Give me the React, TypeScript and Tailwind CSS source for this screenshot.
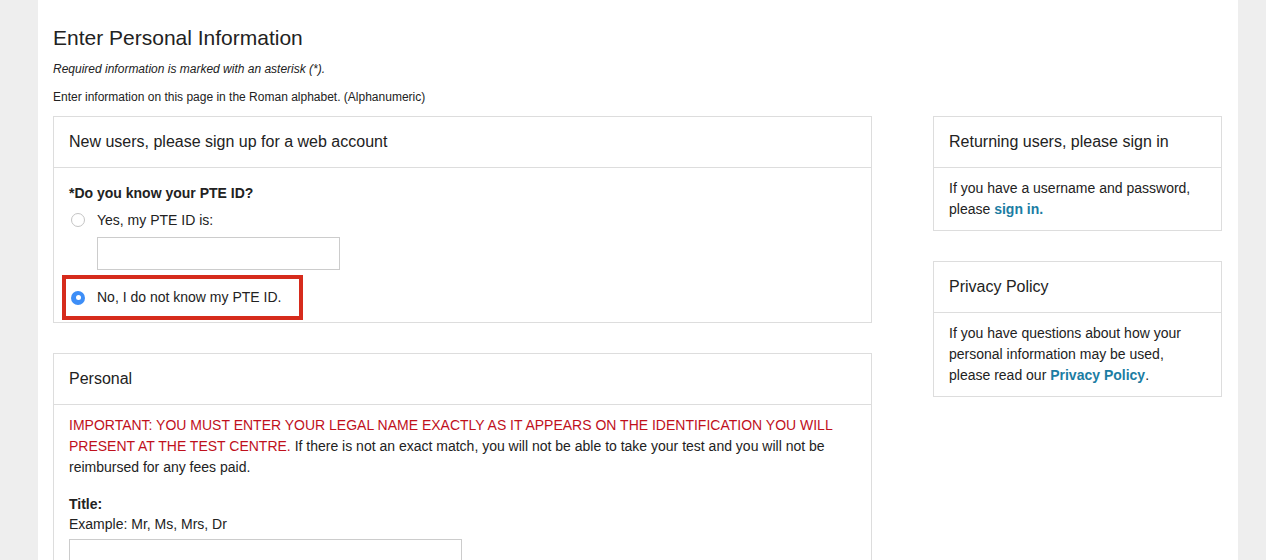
const font = { fontFamily: '"Liberation Sans", Arial, sans-serif' };

const Radio = ({ checked }: { checked?: boolean }) =>
    checked ? (
        <span className="flex h-[14px] w-[14px] items-center justify-center rounded-full bg-[#3d8ef7]">
            <span className="h-[5px] w-[5px] rounded-full bg-white" />
        </span>
    ) : (
        <span className="h-[14px] w-[14px] rounded-full border border-[#c4c4c4] bg-white" />
    );

const Panel = ({ title, children, bodyClass }: { title: string; children: React.ReactNode; bodyClass?: string }) => (
    <div className="border border-[#dddddd] bg-white">
        <div className="flex h-[51px] items-center border-b border-[#dddddd] px-[15px] text-[16px] text-[#222]">{title}</div>
        <div className={bodyClass ?? "px-[15px] py-[10px] text-[14px] leading-[21px] text-[#222]"}>{children}</div>
    </div>
);

export default function App() {
    return (
        <div className="min-h-[560px] bg-[#eeeeee]" style={font}>
            <div className="ml-[38px] min-h-[560px] w-[1200px] bg-white px-[15px] pt-[24px]">
                <h1 className="text-[21px] leading-[27px] text-[#222]">Enter Personal Information</h1>
                <p className="mt-[10px] text-[12px] italic leading-[16px] text-[#222]">
                    Required information is marked with an asterisk (*).
                </p>
                <p className="mt-[12px] text-[12px] leading-[16px] text-[#222]">
                    Enter information on this page in the Roman alphabet. (Alphanumeric)
                </p>

                <div className="mt-[11px] flex gap-[61px]">
                    <div className="flex w-[819px] flex-col gap-[30px]">
                        <Panel title="New users, please sign up for a web account" bodyClass="px-[15px] pt-[15px] pb-[2px] text-[14px] text-[#222]">
                            <p className="font-bold leading-[20px]">*Do you know your PTE ID?</p>
                            <label className="mt-[7px] flex items-center gap-[12px] pl-[2px] leading-[20px]">
                                <Radio />
                                Yes, my PTE ID is:
                            </label>
                            <input className="mt-[7px] ml-[28px] block h-[33px] w-[243px] border border-[#cccccc]" />
                            <div className="mt-[5px] -ml-[7px] inline-flex h-[45px] items-center gap-[12px] border-4 border-[#d62b1c] pl-[5px] pr-[18px]">
                                <Radio checked />
                                <span>No, I do not know my PTE ID.</span>
                            </div>
                        </Panel>

                        <Panel title="Personal" bodyClass="px-[15px] pt-[10px] text-[14px] leading-[21px] text-[#222]">
                            <p>
                                <span className="text-[#c0101c]">
                                    IMPORTANT: YOU MUST ENTER YOUR LEGAL NAME EXACTLY AS IT APPEARS ON THE IDENTIFICATION YOU WILL PRESENT AT THE TEST CENTRE.
                                </span>{" "}
                                If there is not an exact match, you will not be able to take your test and you will not be reimbursed for any fees paid.
                            </p>
                            <p className="mt-[16px] font-bold leading-[20px]">Title:</p>
                            <p className="leading-[20px]">Example: Mr, Ms, Mrs, Dr</p>
                            <input className="mt-[5px] block h-[33px] w-[393px] border border-[#cccccc]" />
                            <div className="h-[40px]" />
                        </Panel>
                    </div>

                    <div className="flex w-[289px] flex-col gap-[30px]">
                        <Panel title="Returning users, please sign in">
                            <p>
                                If you have a username and password, please{" "}
                                <a className="font-bold text-[#1b7da3]">sign in.</a>
                            </p>
                        </Panel>
                        <Panel title="Privacy Policy">
                            <p>
                                If you have questions about how your personal information may be used, please read our{" "}
                                <a className="font-bold text-[#1b7da3]">Privacy Policy</a>.
                            </p>
                        </Panel>
                    </div>
                </div>
            </div>
        </div>
    );
}
